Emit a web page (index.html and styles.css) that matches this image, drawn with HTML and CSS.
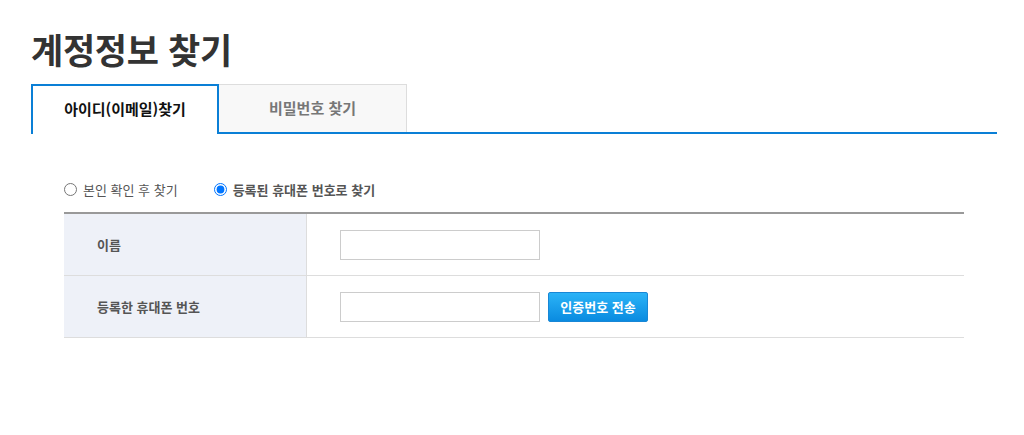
FILE: index.html
```html
<!DOCTYPE html>
<html lang="ko">
<head>
<meta charset="utf-8">
<title>계정정보 찾기</title>
<link rel="stylesheet" href="styles.css">
</head>
<body>
<div class="page">
  <h1 class="title">계정정보 찾기</h1>
  <div class="tabs">
    <div class="tab tab-active">아이디(이메일)찾기</div>
    <div class="tab">비밀번호 찾기</div>
  </div>
  <div class="content">
    <div class="radios">
      <label class="radio"><input type="radio" name="m"> <span>본인 확인 후 찾기</span></label>
      <label class="radio radio-on"><input type="radio" name="m" checked> <span>등록된 휴대폰 번호로 찾기</span></label>
    </div>
    <div class="form">
      <div class="row">
        <div class="label">이름</div>
        <div class="field"><input class="text" type="text"></div>
      </div>
      <div class="row">
        <div class="label">등록한 휴대폰 번호</div>
        <div class="field"><input class="text" type="text"><button class="btn" type="button">인증번호 전송</button></div>
      </div>
    </div>
  </div>
</div>
</body>
</html>
```

FILE: styles.css
```css
* { box-sizing: border-box; }
body {
  margin: 0;
  background: #fff;
  font-family: "Noto Sans CJK KR", "Noto Sans", sans-serif;
  color: #333;
}
.page {
  padding: 0 27px 0 31px;
}
.title {
  margin: 0;
  padding-top: 27px;
  height: 84px;
  font-size: 35px;
  line-height: 44px;
  font-weight: 700;
  color: #333;
  letter-spacing: -0.3px;
}
.tabs {
  display: flex;
  align-items: flex-start;
  height: 50px;
  border-bottom: 2px solid #0a7fd6;
}
.tab {
  width: 188px;
  height: 48px;
  display: flex;
  align-items: center;
  justify-content: center;
  background: #f8f8f8;
  border: 1px solid #ddd;
  border-bottom: none;
  border-left: none;
  font-size: 15px;
  font-weight: 700;
  color: #777;
  padding-bottom: 3px;
}
.tab-active {
  height: 50px;
  background: #fff;
  border: 2px solid #0a7fd6;
  border-bottom: none;
  color: #111;
  padding-bottom: 3px;
}
.content {
  padding: 46px 0 0 33px;
  width: 933px;
}
.radios {
  display: flex;
  gap: 36px;
  height: 32px;
  align-items: flex-start;
}
.radio {
  display: flex;
  align-items: center;
  font-size: 13px;
  color: #555;
}
.radio input {
  margin: 0 6px 0 0;
  width: 13px;
  height: 13px;
}
.radio-on {
  font-weight: 700;
}
.form {
  border-top: 2px solid #999;
}
.row {
  display: flex;
  height: 62px;
  border-bottom: 1px solid #ddd;
}
.label {
  width: 243px;
  background: #eef1f8;
  border-right: 1px solid #ddd;
  display: flex;
  align-items: center;
  padding-left: 33px;
  font-size: 13px;
  font-weight: 700;
  color: #555;
}
.field {
  flex: 1;
  display: flex;
  align-items: center;
  padding-left: 33px;
  gap: 8px;
}
.text {
  width: 200px;
  height: 30px;
  border: 1px solid #ccc;
  margin: 0;
  padding: 0 6px;
  font-family: inherit;
}
.btn {
  width: 100px;
  height: 30px;
  margin: 0;
  padding: 0;
  border: 1px solid #1887d6;
  border-radius: 2px;
  background: linear-gradient(#2bb3f7, #0a8be0);
  color: #fff;
  font-family: inherit;
  font-size: 13px;
  font-weight: 700;
}
```
